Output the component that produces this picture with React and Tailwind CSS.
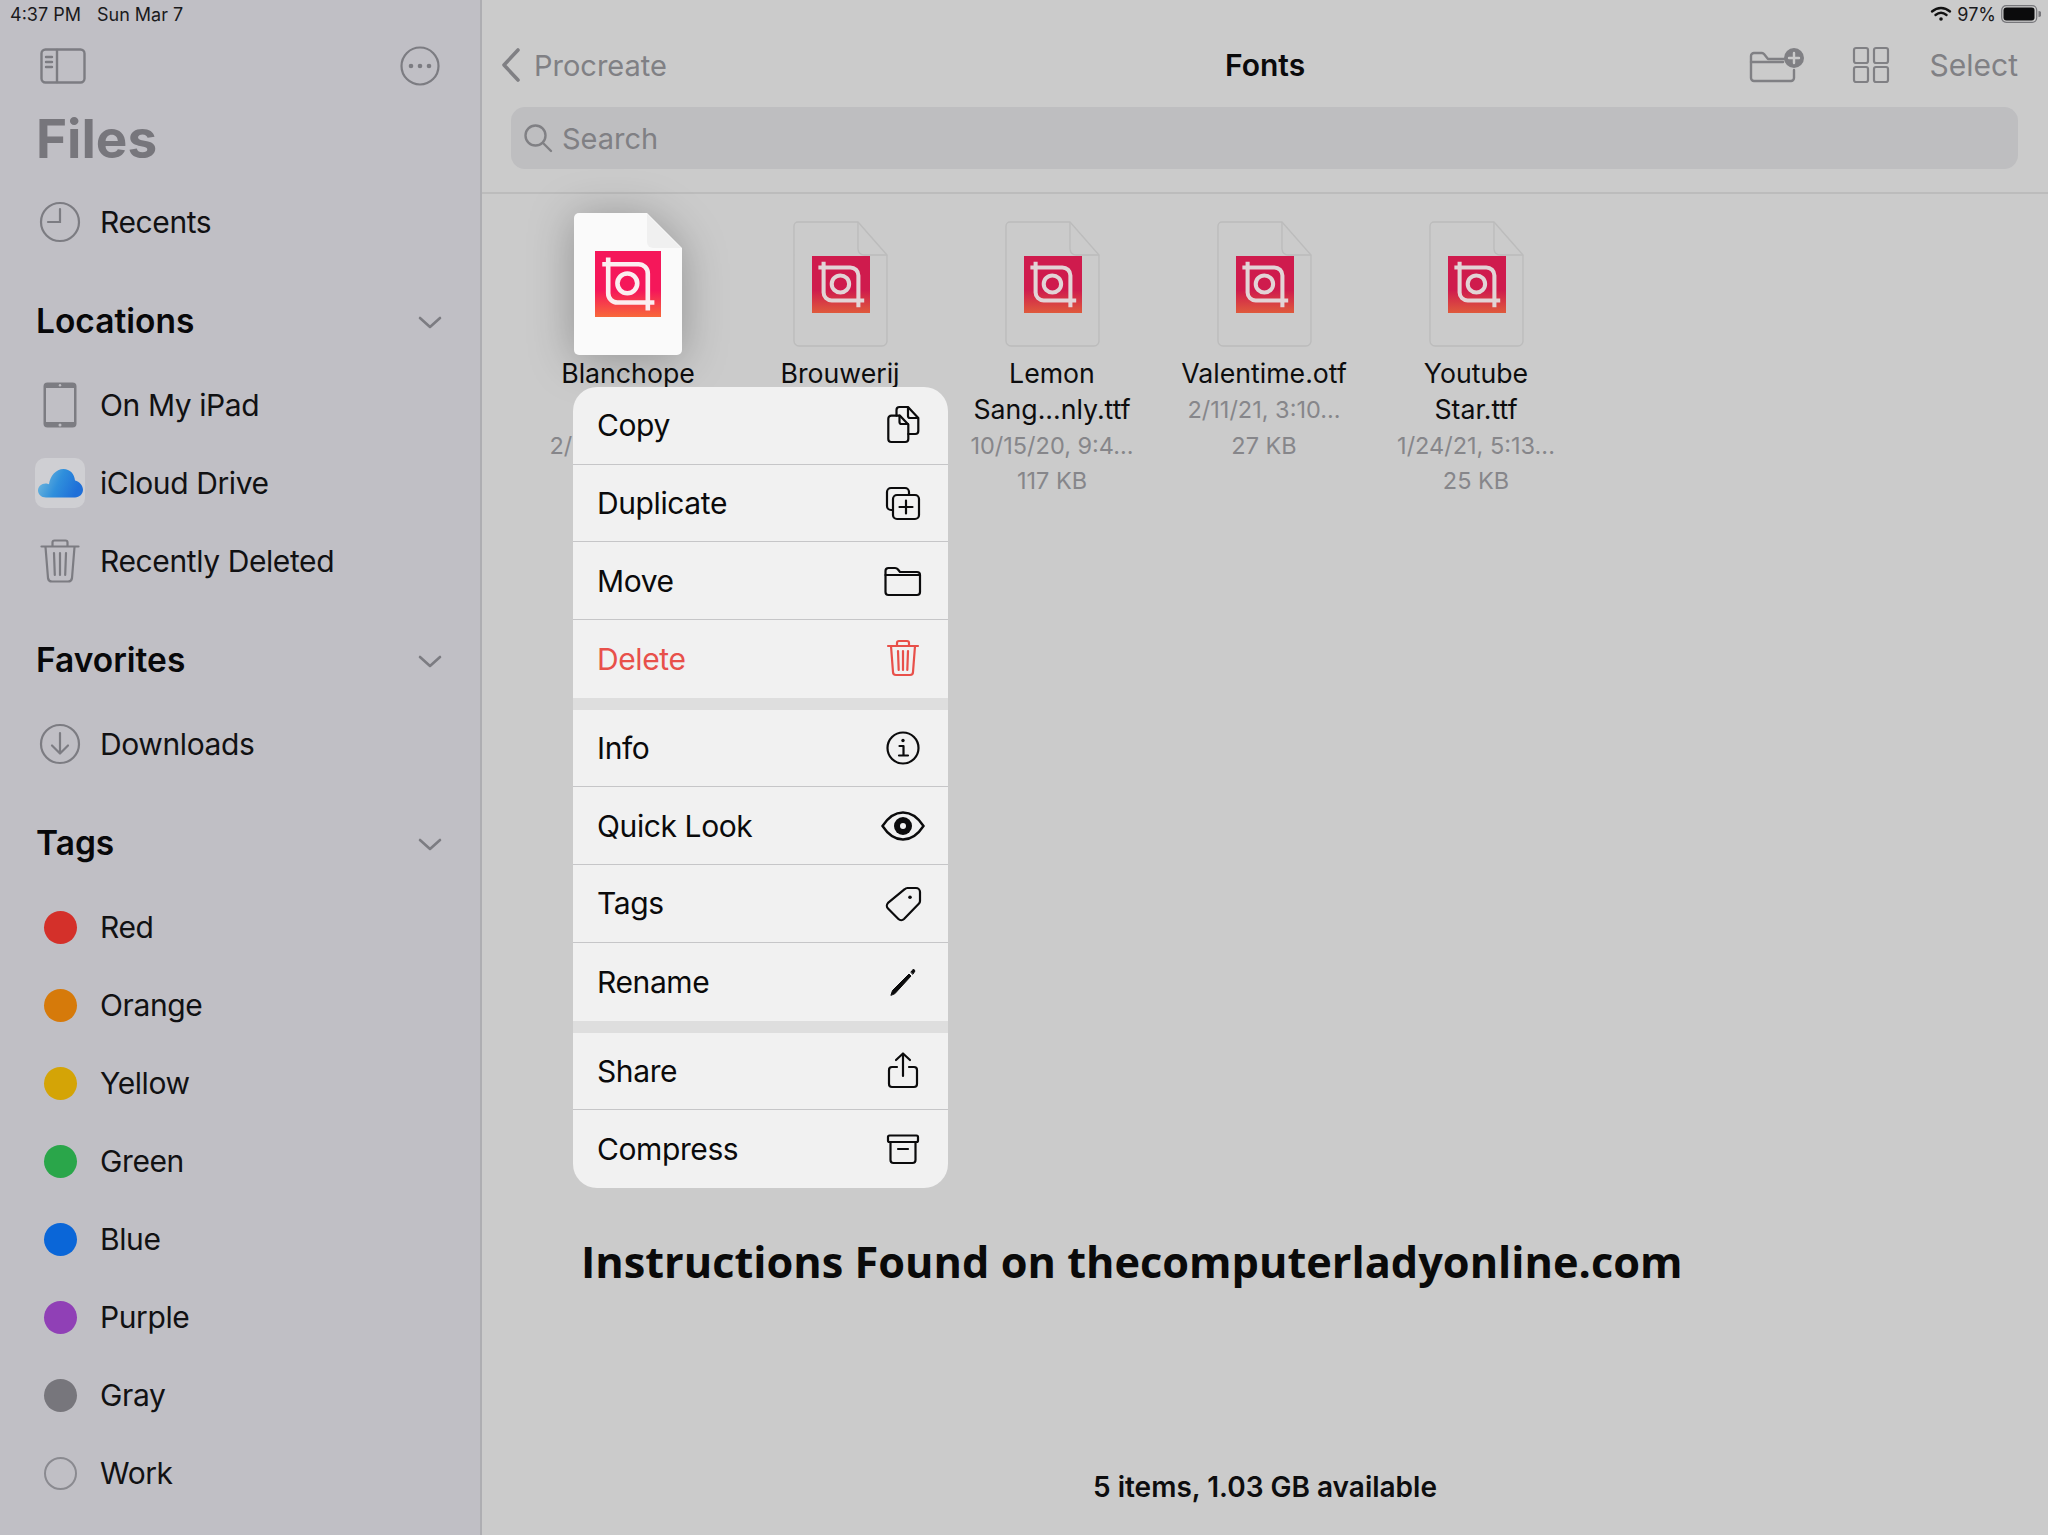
const gray = "#7c7c82";

const SidebarRow = ({ icon, label }) => (
  <div className="flex h-[78px] shrink-0 items-center">
    <div className="flex w-[100px] shrink-0 justify-center pl-[20px]">{icon}</div>
    <span className="text-[30px] leading-none tracking-[-0.4px] text-[#111113]">{label}</span>
  </div>
);

const SectionHeader = ({ title }) => (
  <div className="flex h-[105px] shrink-0 items-start justify-between pl-[36px] pr-[37px] pt-[38px]">
    <span className="text-[33.5px] font-semibold leading-[44px] text-[#08080a]">{title}</span>
    <svg width="26" height="16" viewBox="0 0 26 16" fill="none" className="mt-[16px]">
      <path d="M3 3 L13 12 L23 3" stroke={gray} strokeWidth="2.6" strokeLinecap="round" strokeLinejoin="round" />
    </svg>
  </div>
);

const Dot = ({ color }) => <div className={`h-[33px] w-[33px] rounded-full ${color}`} />;

const ClockIcon = () => (
  <svg width="42" height="42" viewBox="0 0 42 42" fill="none" stroke={gray} strokeWidth="2.2" strokeLinecap="round">
    <circle cx="21" cy="21" r="19" />
    <path d="M21 8 V21 H9" />
  </svg>
);

const IpadIcon = () => (
  <svg width="34" height="46" viewBox="0 0 34 46">
    <rect x="0.5" y="0.5" width="33" height="45" rx="4" fill={gray} />
    <rect x="3" y="6" width="28" height="34" fill="#c0bfc5" />
    <circle cx="17" cy="3.3" r="1.2" fill="#c0bfc5" />
    <circle cx="17" cy="43" r="1.5" fill="#c0bfc5" />
  </svg>
);

const CloudTile = () => (
  <div className="flex h-[50px] w-[50px] items-center justify-center rounded-[10px] bg-[#cfcfd3]">
    <svg width="45" height="30" viewBox="0 0 45 30">
      <defs>
        <linearGradient id="cloudFill" x1="0" y1="0" x2="1" y2="0.3">
          <stop offset="0" stopColor="#7fc0dc" />
          <stop offset="0.55" stopColor="#2f8fdc" />
          <stop offset="1" stopColor="#1f6fd8" />
        </linearGradient>
      </defs>
      <path
        d="M8 29.5 C3 29.5 0 26 0 22.5 C0 18.5 3.5 15.5 7.5 15.5 C9 15.5 10 15.8 11 16.3 C12 8 18 1 25.5 1 C32 1 36.5 6 37 12.5 C41.5 13.5 45 17.5 45 21.8 C45 26 41.5 29.5 37 29.5 Z"
        fill="url(#cloudFill)"
      />
    </svg>
  </div>
);

const TrashGrayIcon = () => (
  <svg width="40" height="44" viewBox="0 0 40 44" fill="none" stroke={gray} strokeWidth="2.2" strokeLinecap="round">
    <path d="M1.5 7.5 H38.5" />
    <path d="M12.5 7 V3.5 a2 2 0 0 1 2-2 H25.5 a2 2 0 0 1 2 2 V7" />
    <path d="M5.5 8 L8 39 a4 4 0 0 0 4 3.5 H28 a4 4 0 0 0 4-3.5 L34.5 8" />
    <path d="M14 14 L14.8 36 M20 14 V36 M26 14 L25.2 36" />
  </svg>
);

const DownloadIcon = () => (
  <svg width="42" height="42" viewBox="0 0 42 42" fill="none" stroke={gray} strokeWidth="2.2" strokeLinecap="round" strokeLinejoin="round">
    <circle cx="21" cy="21" r="19" />
    <path d="M21 10 V30 M13 22.5 L21 30.5 L29 22.5" />
  </svg>
);

const menuIconProps = {
  width: 40,
  height: 40,
  viewBox: "0 0 40 40",
  fill: "none",
  stroke: "#0b0b0c",
  strokeWidth: 2.2,
  strokeLinecap: "round",
  strokeLinejoin: "round",
};

const CopyIcon = () => (
  <svg {...menuIconProps}>
    <path d="M13.5 10.7 V5 a3 3 0 0 1 3-3 H25 L35.3 13 V26 a3 3 0 0 1-3 3 H25.3" />
    <path d="M25 2.5 V11 a2 2 0 0 0 2 2 H35" />
    <path d="M5.3 13.7 a3 3 0 0 1 3-3 H17 L25.3 19.5 V34 a3 3 0 0 1-3 3 H8.3 a3 3 0 0 1-3-3 Z" />
    <path d="M16.5 10.7 V17 a2 2 0 0 0 2 2 H25" />
  </svg>
);

const DuplicateIcon = () => (
  <svg {...menuIconProps}>
    <path d="M10 27 H8 a4 4 0 0 1-4-4 V9 a4 4 0 0 1 4-4 H22 a4 4 0 0 1 4 4 V12" />
    <rect x="10" y="12" width="26" height="24" rx="4" />
    <path d="M23 17.5 V30.5 M16.5 24 H29.5" />
  </svg>
);

const FolderIcon = () => (
  <svg {...menuIconProps}>
    <path d="M2.5 10 a3 3 0 0 1 3-3 H12 a4 4 0 0 1 3 1.5 L17 11 H34 a3 3 0 0 1 3 3 V31 a3 3 0 0 1-3 3 H5.5 a3 3 0 0 1-3-3 Z" />
    <path d="M2.5 14 H37" />
  </svg>
);

const TrashRedIcon = () => (
  <svg {...menuIconProps} stroke="#e8504a">
    <path d="M5 7 H35" />
    <path d="M14 7 V4 a2 2 0 0 1 2-2 H24 a2 2 0 0 1 2 2 V7" />
    <path d="M8 7 L10 33 a3 3 0 0 0 3 3 H27 a3 3 0 0 0 3-3 L32 7" />
    <path d="M15 12 L15.7 31 M20 12 V31 M25 12 L24.3 31" />
  </svg>
);

const InfoIcon = () => (
  <svg {...menuIconProps}>
    <circle cx="20" cy="20" r="15.5" />
    <path d="M16.5 18 H20.5 V27 M16 27.5 H25" />
    <circle cx="20" cy="12.5" r="1.7" fill="#0b0b0c" stroke="none" />
  </svg>
);

const EyeIcon = () => (
  <svg width="44" height="32" viewBox="0 0 44 32" fill="none" stroke="#0b0b0c" strokeWidth="2.4">
    <path d="M1.5 16 C8 6 14 2.5 22 2.5 S36 6 42.5 16 C36 26 30 29.5 22 29.5 S8 26 1.5 16 Z" />
    <circle cx="22" cy="16" r="9" fill="#0b0b0c" stroke="none" />
    <circle cx="22" cy="16" r="3" fill="#f1f1f1" stroke="none" />
  </svg>
);

const TagIcon = () => (
  <svg {...menuIconProps}>
    <path d="M24.5 5 H33 a4 4 0 0 1 4 4 V18 a4 4 0 0 1-1.2 2.8 L21 36 a4 4 0 0 1-5.6 0 L5 25.5 a4 4 0 0 1 0-5.6 L21.7 6.2 a4 4 0 0 1 2.8-1.2 Z" />
    <circle cx="27" cy="14.3" r="1.8" fill="#0b0b0c" stroke="none" />
  </svg>
);

const PencilIcon = () => (
  <svg {...menuIconProps} strokeWidth="1">
    <path d="M8 33 L9.5 28.5 L26 12 L28 14 L12 31.5 Z" fill="#0b0b0c" />
    <path d="M28 10 L30.5 7 L32 9 L30 12 Z" fill="#0b0b0c" />
  </svg>
);

const ShareIcon = () => (
  <svg {...menuIconProps}>
    <path d="M14 16 H9 a3 3 0 0 0-3 3 V33 a3 3 0 0 0 3 3 H31 a3 3 0 0 0 3-3 V19 a3 3 0 0 0-3-3 H26" />
    <path d="M20 25 V3 M13 9 L20 2.5 L27 9" />
  </svg>
);

const ArchiveIcon = () => (
  <svg {...menuIconProps}>
    <rect x="5" y="6.5" width="30" height="6.5" rx="1.5" />
    <path d="M7.5 13 V31 a3 3 0 0 0 3 3 H29.5 a3 3 0 0 0 3-3 V13" />
    <path d="M15 20 H25" />
  </svg>
);

const CropLogo = ({ id, size, from, to, line }) => (
  <svg width={size[0]} height={size[1]} viewBox="0 0 100 100" preserveAspectRatio="none" fill="none">
    <defs>
      <linearGradient id={id} x1="0" y1="0" x2="0" y2="1">
        <stop offset="0" stopColor={from} />
        <stop offset="0.6" stopColor={from} />
        <stop offset="1" stopColor={to} />
      </linearGradient>
    </defs>
    <rect width="100" height="100" fill={`url(#${id})`} />
    <g stroke={line} strokeWidth="7">
      <path d="M11 20 H66 a14 14 0 0 1 14 14 V90" />
      <path d="M20 10 V64 a14 14 0 0 0 14 14 H90" />
      <circle cx="49" cy="49" r="15" />
    </g>
  </svg>
);

const SelectedDoc = () => (
  <div className="relative h-[142px] w-[108px]">
    <svg width="108" height="142" viewBox="0 0 108 142" className="drop-shadow-[0_4px_22px_rgba(0,0,0,0.28)]">
      <path d="M5 0 H73 L108 35 V137 a5 5 0 0 1-5 5 H5 a5 5 0 0 1-5-5 V5 a5 5 0 0 1 5-5 Z" fill="#fafafa" />
      <path d="M73 1 V29 a6 6 0 0 0 6 6 H107 Z" fill="#f0f0f0" />
    </svg>
    <div className="absolute left-[21px] top-[38px]">
      <CropLogo id="logoSel" size={[66, 66]} from="#f5175a" to="#f8683a" line="#fbeef0" />
    </div>
  </div>
);

const PlainDoc = ({ id }) => (
  <div className="relative h-[126px] w-[95px]">
    <svg width="95" height="126" viewBox="0 0 95 126" fill="none">
      <path d="M5 1 H65 L94 34 V120 a5 5 0 0 1-5 5 H6 a5 5 0 0 1-5-5 V5 a4 4 0 0 1 4-4 Z" fill="#cbcbcb" stroke="#bcbcbc" strokeWidth="1.4" />
      <path d="M65 1 V28 a6 6 0 0 0 6 6 H94" stroke="#bcbcbc" strokeWidth="1.4" />
    </svg>
    <div className="absolute left-[19px] top-[35px]">
      <CropLogo id={id} size={[58, 57]} from="#cf1b4d" to="#df5a3c" line="#e2d4d6" />
    </div>
  </div>
);

const files = [
  { name: ["Blanchope", "\u00a0"], meta: ["2/"], selected: true },
  { name: ["Brouwerij"], meta: [] },
  { name: ["Lemon", "Sang...nly.ttf"], meta: ["10/15/20, 9:4...", "117 KB"] },
  { name: ["Valentime.otf"], meta: ["2/11/21, 3:10...", "27 KB"] },
  { name: ["Youtube", "Star.ttf"], meta: ["1/24/21, 5:13...", "25 KB"] },
];

const FileItem = ({ file, index }) => (
  <div className="flex w-[212px] flex-col items-center">
    <div className="flex h-[144px] items-start pt-[1px]">
      {file.selected ? (
        <SelectedDoc />
      ) : (
        <div className="pt-[8px]">
          <PlainDoc id={`logo${index}`} />
        </div>
      )}
    </div>
    {file.name.map((line) => (
      <div key={line} className="h-[35.8px] whitespace-nowrap text-[26.7px] leading-[35.8px] text-[#0d0d0e]">
        {line}
      </div>
    ))}
    {file.meta.map((line) => (
      <div
        key={line}
        className={`h-[35.8px] whitespace-nowrap text-[23.5px] leading-[35.8px] text-[#86868a] ${
          file.selected ? "w-[157px]" : ""
        }`}
      >
        {line}
      </div>
    ))}
  </div>
);

const MenuRow = ({ label, icon, red, last }) => (
  <div
    className={`flex h-[77.7px] items-center justify-between pl-[24px] pr-[21px] ${
      last ? "" : "border-b border-[#c6c6c8]"
    }`}
  >
    <span className={`text-[30px] leading-none tracking-[-0.4px] ${red ? "text-[#e8504a]" : "text-[#0a0a0b]"}`}>
      {label}
    </span>
    <div className="flex w-[48px] justify-center">{icon}</div>
  </div>
);

const ContextMenu = () => (
  <div className="absolute left-[91px] top-[193px] w-[375px] overflow-hidden rounded-[24px] bg-[#f1f1f1]">
    <MenuRow label="Copy" icon={<CopyIcon />} />
    <MenuRow label="Duplicate" icon={<DuplicateIcon />} />
    <MenuRow label="Move" icon={<FolderIcon />} />
    <MenuRow label="Delete" icon={<TrashRedIcon />} red last />
    <div className="h-[12px] bg-[#dedede]" />
    <MenuRow label="Info" icon={<InfoIcon />} />
    <MenuRow label="Quick Look" icon={<EyeIcon />} />
    <MenuRow label="Tags" icon={<TagIcon />} />
    <MenuRow label="Rename" icon={<PencilIcon />} last />
    <div className="h-[12px] bg-[#dedede]" />
    <MenuRow label="Share" icon={<ShareIcon />} />
    <MenuRow label="Compress" icon={<ArchiveIcon />} last />
  </div>
);

const Sidebar = () => (
  <div className="flex h-full w-[482px] shrink-0 flex-col overflow-hidden border-r-2 border-[#aeaeb2] bg-[#c0bfc5]">
    <div className="flex h-[28px] shrink-0 items-center gap-[16px] pl-[10px] text-[18px] text-[#1a1a1c]">
      <span>4:37 PM</span>
      <span>Sun Mar 7</span>
    </div>
    <div className="flex h-[75px] shrink-0 items-center justify-between pl-[40px] pr-[40px]">
      <svg width="46" height="36" viewBox="0 0 46 36" fill="none" stroke={gray} strokeWidth="2.4" strokeLinecap="round">
        <rect x="1.5" y="1.5" width="43" height="33" rx="4" />
        <path d="M17 2 V34" />
        <path d="M6 9 H12 M6 14 H12 M6 19 H12" />
      </svg>
      <svg width="40" height="40" viewBox="0 0 40 40" fill="none" stroke={gray} strokeWidth="2.2">
        <circle cx="20" cy="20" r="18.5" />
        <circle cx="11" cy="20" r="2.3" fill={gray} stroke="none" />
        <circle cx="20" cy="20" r="2.3" fill={gray} stroke="none" />
        <circle cx="29" cy="20" r="2.3" fill={gray} stroke="none" />
      </svg>
    </div>
    <div className="flex h-[80px] shrink-0 items-center pb-[8px] pl-[36px] text-[53px] font-bold leading-none text-[#77767c]">
      Files
    </div>
    <SidebarRow icon={<ClockIcon />} label="Recents" />
    <SectionHeader title="Locations" />
    <SidebarRow icon={<IpadIcon />} label="On My iPad" />
    <SidebarRow icon={<CloudTile />} label="iCloud Drive" />
    <SidebarRow icon={<TrashGrayIcon />} label="Recently Deleted" />
    <SectionHeader title="Favorites" />
    <SidebarRow icon={<DownloadIcon />} label="Downloads" />
    <SectionHeader title="Tags" />
    <SidebarRow icon={<Dot color="bg-[#d4302a]" />} label="Red" />
    <SidebarRow icon={<Dot color="bg-[#d67a0a]" />} label="Orange" />
    <SidebarRow icon={<Dot color="bg-[#d4a406]" />} label="Yellow" />
    <SidebarRow icon={<Dot color="bg-[#2aa64a]" />} label="Green" />
    <SidebarRow icon={<Dot color="bg-[#0a66d8]" />} label="Blue" />
    <SidebarRow icon={<Dot color="bg-[#9040b6]" />} label="Purple" />
    <SidebarRow icon={<Dot color="bg-[#77767c]" />} label="Gray" />
    <SidebarRow icon={<Dot color="border-2 border-[#8a8a90]" />} label="Work" />
    <SidebarRow icon={<Dot color="border-2 border-[#8a8a90]" />} label="" />
  </div>
);

const TopBar = () => (
  <>
    <div className="flex h-[28px] items-center justify-end gap-[5px] pr-[7px] text-[18px] text-[#1a1a1c]">
      <svg width="22" height="16" viewBox="0 0 22 16" fill="none" stroke="#111" strokeWidth="2.4" strokeLinecap="round">
        <path d="M2 5.5 C7.5 0.8 14.5 0.8 20 5.5" />
        <path d="M5.5 9 C9 6.2 13 6.2 16.5 9" />
        <circle cx="11" cy="13" r="1.8" fill="#111" stroke="none" />
      </svg>
      <span>97%</span>
      <svg width="40" height="18" viewBox="0 0 40 18">
        <rect x="0.7" y="0.7" width="35" height="16.6" rx="4.5" fill="none" stroke="#77777b" strokeWidth="1.2" />
        <rect x="2.5" y="2.5" width="31" height="13" rx="3" fill="#0b0b0c" />
        <path d="M37.5 6 a3 3 0 0 1 0 6 Z" fill="#77777b" />
      </svg>
    </div>
    <div className="relative flex h-[74px] items-center justify-between pl-[19px] pr-[30px]">
      <div className="flex items-center gap-[13px]">
        <svg width="20" height="36" viewBox="0 0 20 36" fill="none" stroke="#808084" strokeWidth="3.6" strokeLinecap="round" strokeLinejoin="round">
          <path d="M17 3 L3 18 L17 33" />
        </svg>
        <span className="text-[29px] leading-none text-[#808084]">Procreate</span>
      </div>
      <span className="absolute left-[743px] top-[19px] text-[30px] font-semibold leading-[36px] text-[#0a0a0b]">Fonts</span>
      <div className="flex items-center">
        <svg width="56" height="38" viewBox="0 0 56 38" fill="none" stroke="#808084" strokeWidth="2.4" strokeLinecap="round" strokeLinejoin="round">
          <path d="M36 13 H19 L15 8 a3 3 0 0 0-2-1 H5 a3 3 0 0 0-3 3 V32 a3 3 0 0 0 3 3 H42 a3 3 0 0 0 3-3 V24" />
          <path d="M2 16 H34" />
          <circle cx="45" cy="12" r="10" fill="#808084" stroke="none" />
          <path d="M45 7 V17 M40 12 H50" stroke="#cbcbcb" />
        </svg>
        <svg width="38" height="38" viewBox="0 0 38 38" fill="none" stroke="#808084" strokeWidth="2.2" className="ml-[47px]">
          <rect x="2" y="2" width="14" height="15" rx="2" />
          <rect x="22" y="2" width="14" height="15" rx="2" />
          <rect x="2" y="21" width="14" height="15" rx="2" />
          <rect x="22" y="21" width="14" height="15" rx="2" />
        </svg>
        <span className="ml-[40px] text-[30px] leading-none text-[#808084]">Select</span>
      </div>
    </div>
    <div className="px-[29px] pt-[5px]">
      <div className="flex h-[62px] w-[1507px] items-center gap-[9px] rounded-[14px] bg-[#bebec0] pl-[12px]">
        <svg width="30" height="30" viewBox="0 0 30 30" fill="none" stroke="#808084" strokeWidth="2.4" strokeLinecap="round">
          <circle cx="12.5" cy="12.5" r="10" />
          <path d="M20 20 L28 28" />
        </svg>
        <span className="text-[29px] leading-none text-[#808084]">Search</span>
      </div>
    </div>
    <div className="mt-[23px] h-[2px] bg-[#bcbcbc]" />
  </>
);

export default function App() {
  return (
    <div className="flex h-[1535px] w-[2048px] overflow-hidden bg-[#cbcbcb] font-['Inter',sans-serif]">
      <Sidebar />
      <div className="flex h-full min-w-0 flex-1 flex-col">
        <TopBar />
        <div className="relative flex min-h-0 flex-1 flex-col">
          <div className="flex h-[1038px] shrink-0 items-start pl-[40px] pt-[18px]">
            {files.map((file, index) => (
              <FileItem key={file.name[0]} file={file} index={index} />
            ))}
          </div>
          <ContextMenu />
          <div className="pl-[99px] font-['Open_Sans',sans-serif] text-[43.3px] font-bold leading-[60px] text-[#0a0a0a]">
            Instructions Found on thecomputerladyonline.com
          </div>
          <div className="mt-[177px] text-center text-[28px] font-semibold leading-[36px] text-[#0d0d0e]">
            5 items, 1.03 GB available
          </div>
        </div>
      </div>
    </div>
  );
}
